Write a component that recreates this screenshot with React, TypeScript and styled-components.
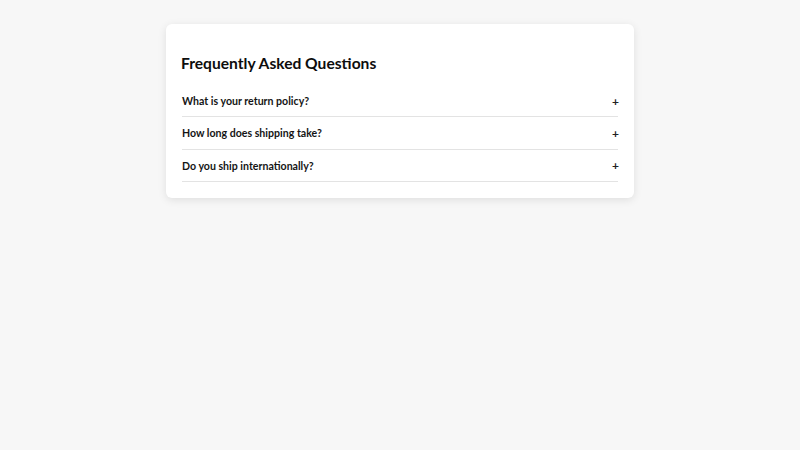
import React from 'react'
import styled, { createGlobalStyle } from 'styled-components'

const GlobalStyle = createGlobalStyle`
  html, body {
    margin: 0;
    padding: 0;
    background: #f7f7f7;
    font-family: Lato, "Noto Sans", sans-serif;
    color: #111;
  }
`

const Page = styled.div`
  display: flex;
  justify-content: center;
  padding-top: 24px;
  min-height: 450px;
  box-sizing: border-box;
`

const Card = styled.section`
  width: 468px;
  box-sizing: border-box;
  background: #fff;
  border-radius: 6px;
  box-shadow: 0 2px 8px rgba(0, 0, 0, 0.1);
  padding: 16px 16px 16px 15px;
  align-self: flex-start;
`

const Title = styled.h2`
  margin: 13px 0 12px;
  font-size: 15.6px;
  font-weight: 700;
  line-height: 20px;
  color: #0d0d0d;
`

const Item = styled.div`
  display: flex;
  justify-content: space-between;
  align-items: center;
  height: 32px;
  border-bottom: 1px solid #e3e3e3;
  box-sizing: border-box;
  padding-top: 1px;
  margin-left: 1px;
  &:not(:first-of-type) {
    height: 32.5px;
  }
`

const Question = styled.span`
  font-size: 10.6px;
  font-weight: 700;
  color: #151515;
`

const Toggle = styled.span`
  font-size: 12px;
  font-weight: 700;
  color: #222;
  margin-right: -1px;
`

const questions = [
  'What is your return policy?',
  'How long does shipping take?',
  'Do you ship internationally?',
]

const App = () => {
  return (
    <>
      <GlobalStyle />
      <Page>
        <Card>
          <Title>Frequently Asked Questions</Title>
          {questions.map((q, i) => (
            <Item key={i}>
              <Question>{q}</Question>
              <Toggle>+</Toggle>
            </Item>
          ))}
        </Card>
      </Page>
    </>
  )
}

export default App
